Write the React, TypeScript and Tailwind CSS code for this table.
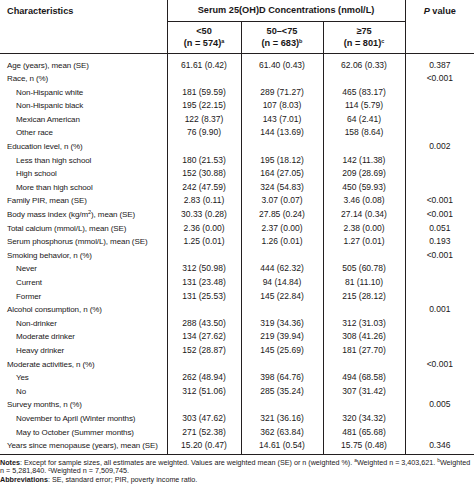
const rows: [string, boolean, string, string, string, string][] = [
  ["Age (years), mean (SE)", false, "61.61 (0.42)", "61.40 (0.43)", "62.06 (0.33)", "0.387"],
  ["Race, n (%)", false, "", "", "", "<0.001"],
  ["Non-Hispanic white", true, "181 (59.59)", "289 (71.27)", "465 (83.17)", ""],
  ["Non-Hispanic black", true, "195 (22.15)", "107 (8.03)", "114 (5.79)", ""],
  ["Mexican American", true, "122 (8.37)", "143 (7.01)", "64 (2.41)", ""],
  ["Other race", true, "76 (9.90)", "144 (13.69)", "158 (8.64)", ""],
  ["Education level, n (%)", false, "", "", "", "0.002"],
  ["Less than high school", true, "180 (21.53)", "195 (18.12)", "142 (11.38)", ""],
  ["High school", true, "152 (30.88)", "164 (27.05)", "209 (28.69)", ""],
  ["More than high school", true, "242 (47.59)", "324 (54.83)", "450 (59.93)", ""],
  ["Family PIR, mean (SE)", false, "2.83 (0.11)", "3.07 (0.07)", "3.46 (0.08)", "<0.001"],
  ["BMI", false, "30.33 (0.28)", "27.85 (0.24)", "27.14 (0.34)", "<0.001"],
  ["Total calcium (mmol/L), mean (SE)", false, "2.36 (0.00)", "2.37 (0.00)", "2.38 (0.00)", "0.051"],
  ["Serum phosphorus (mmol/L), mean (SE)", false, "1.25 (0.01)", "1.26 (0.01)", "1.27 (0.01)", "0.193"],
  ["Smoking behavior, n (%)", false, "", "", "", "<0.001"],
  ["Never", true, "312 (50.98)", "444 (62.32)", "505 (60.78)", ""],
  ["Current", true, "131 (23.48)", "94 (14.84)", "81 (11.10)", ""],
  ["Former", true, "131 (25.53)", "145 (22.84)", "215 (28.12)", ""],
  ["Alcohol consumption, n (%)", false, "", "", "", "0.001"],
  ["Non-drinker", true, "288 (43.50)", "319 (34.36)", "312 (31.03)", ""],
  ["Moderate drinker", true, "134 (27.62)", "219 (39.94)", "308 (41.26)", ""],
  ["Heavy drinker", true, "152 (28.87)", "145 (25.69)", "181 (27.70)", ""],
  ["Moderate activities, n (%)", false, "", "", "", "<0.001"],
  ["Yes", true, "262 (48.94)", "398 (64.76)", "494 (68.58)", ""],
  ["No", true, "312 (51.06)", "285 (35.24)", "307 (31.42)", ""],
  ["Survey months, n (%)", false, "", "", "", "0.005"],
  ["November to April (Winter months)", true, "303 (47.62)", "321 (36.16)", "320 (34.32)", ""],
  ["May to October (Summer months)", true, "271 (52.38)", "362 (63.84)", "481 (65.68)", ""],
  ["Years since menopause (years), mean (SE)", false, "15.20 (0.47)", "14.61 (0.54)", "15.75 (0.48)", "0.346"],
];

function Label({ text }: { text: string }) {
  if (text === "BMI") {
    return (
      <>
        Body mass index (kg/m<sup className="text-[5.5px]">2</sup>), mean (SE)
      </>
    );
  }
  return <>{text}</>;
}

export default function App() {
  return (
    <div className="w-[474px] h-[489px] overflow-hidden bg-white text-[#1a1718] font-['Liberation_Sans',sans-serif]">
      <table className="w-[474px] table-fixed border-collapse text-[8.5px]">
        <colgroup>
          <col className="w-[167px]" />
          <col className="w-[74px]" />
          <col className="w-[82px]" />
          <col className="w-[82px]" />
          <col className="w-[69px]" />
        </colgroup>
        <thead className="text-[9.2px]">
          <tr className="h-[21px] leading-[12px]">
            <th rowSpan={2} className="border-r border-b border-[#231f20] pl-[7px] pt-[5px] text-left align-top font-bold">
              Characteristics
            </th>
            <th colSpan={3} className="border-r border-b border-[#231f20] text-center align-middle font-bold">
              Serum 25(OH)D Concentrations (nmol/L)
            </th>
            <th rowSpan={2} className="border-b border-[#231f20] pt-[5px] text-center align-top font-bold">
              <i>P</i> value
            </th>
          </tr>
          <tr className="h-[32px] leading-[12px]">
            <th className="border-r border-b border-[#231f20] text-center font-bold">
              &lt;50
              <br />
              (n = 574)<sup className="text-[5.5px]">a</sup>
            </th>
            <th className="border-r border-b border-[#231f20] text-center font-bold">
              50–&lt;75
              <br />
              (n = 683)<sup className="text-[5.5px]">b</sup>
            </th>
            <th className="border-r border-b border-[#231f20] text-center font-bold">
              ≥75
              <br />
              (n = 801)<sup className="text-[5.5px]">c</sup>
            </th>
          </tr>
        </thead>
        <tbody className="border-b border-[#231f20]">
          {rows.map(([label, indent, a, b, c, p], i) => {
            const pad = i === 0 ? "pt-[5px]" : i === rows.length - 1 ? "pb-[1px]" : "";
            const cell = `align-middle leading-[13.6px] whitespace-nowrap ${pad}`;
            return (
              <tr key={i}>
                <td className={`border-r border-[#231f20] text-[8px] tracking-[-0.1px] ${indent ? "pl-[16px]" : "pl-[7px]"} ${cell}`}>
                  <Label text={label} />
                </td>
                <td className={`border-r border-[#231f20] text-center ${cell}`}>{a}</td>
                <td className={`border-r border-[#231f20] text-center ${cell}`}>{b}</td>
                <td className={`border-r border-[#231f20] text-center ${cell}`}>{c}</td>
                <td className={`text-center ${cell}`}>{p}</td>
              </tr>
            );
          })}
        </tbody>
      </table>
      <div className="pt-[4px] text-[7.2px] leading-[8.6px] whitespace-nowrap">
        <p>
          <b>Notes</b>: Except for sample sizes, all estimates are weighted. Values are weighted mean (SE) or n (weighted %).{" "}
          <sup className="text-[4.8px]">a</sup>Weighted n = 3,403,621. <sup className="text-[4.8px]">b</sup>Weighted
          <br />
          n = 5,281,840. <sup className="text-[4.8px]">c</sup>Weighted n = 7,509,745.
        </p>
        <p className="pt-[0.5px]">
          <b>Abbreviations</b>: SE, standard error; PIR, poverty income ratio.
        </p>
      </div>
    </div>
  );
}
